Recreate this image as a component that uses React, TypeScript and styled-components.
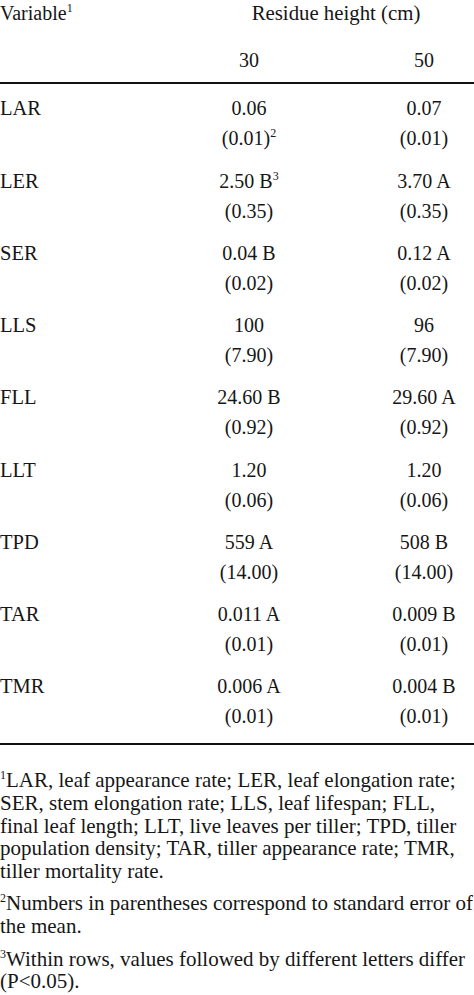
import React from "react";
import styled, { createGlobalStyle } from "styled-components";

const GlobalStyle = createGlobalStyle`
  html, body {
    margin: 0;
    padding: 0;
    background: #ffffff;
  }
  body {
    font-family: "Liberation Serif", "Times New Roman", serif;
    color: #161616;
  }
`;

const Page = styled.div`
  width: 474px;
  overflow: hidden;
`;

const Grid = styled.div`
  display: grid;
  grid-template-columns: 124px 250px 100px;
  font-size: 20px;
`;

const HeadGrid = styled(Grid)`
  line-height: 26px;
  padding-bottom: 9px;
`;

const HeadCell = styled.div<{ $span?: boolean }>`
  grid-column: ${(p) => (p.$span ? "2 / 4" : "auto")};
  padding-left: ${(p) => (p.$span ? "74px" : "0")};
  text-align: ${(p) => (p.$span ? "center" : "left")};
  font-size: ${(p) => (p.$span ? "20.8px" : "20px")};
  white-space: nowrap;
`;

const NumHead = styled.div<{ $top?: number }>`
  text-align: center;
  margin-top: ${(p) => p.$top ?? 0}px;
`;

const Rule = styled.div<{ $weight: number }>`
  height: ${(p) => p.$weight}px;
  background: #111111;
`;

const Body = styled.div`
  padding: 3.5px 0 5.5px;
`;

const Row = styled(Grid)`
  line-height: 30px;
  padding: 6px 0 6.25px;
`;

const Label = styled.div`
  font-size: 20.5px;
`;

const Cell = styled.div`
  display: flex;
  flex-direction: column;
  align-items: center;
  white-space: nowrap;
`;

const Sup = styled.sup`
  font-size: 12px;
  line-height: 0;
  vertical-align: 8px;
`;

const Notes = styled.div`
  padding-top: 24px;
  font-size: 21px;
  line-height: 22.8px;
  display: flex;
  flex-direction: column;
  gap: 9.5px;
`;

const Note = styled.p`
  margin: 0;
  white-space: nowrap;
`;

const NoteLine = styled.span`
  display: block;
`;

const NoteSup = styled.sup`
  font-size: 12px;
  line-height: 0;
  vertical-align: 8px;
`;

type Value = { text: string; sup?: string };
type RowData = { label: string; a: Value; aSe: Value; b: Value; bSe: Value };

const rows: RowData[] = [
  { label: "LAR", a: { text: "0.06" }, aSe: { text: "(0.01)", sup: "2" }, b: { text: "0.07" }, bSe: { text: "(0.01)" } },
  { label: "LER", a: { text: "2.50 B", sup: "3" }, aSe: { text: "(0.35)" }, b: { text: "3.70 A" }, bSe: { text: "(0.35)" } },
  { label: "SER", a: { text: "0.04 B" }, aSe: { text: "(0.02)" }, b: { text: "0.12 A" }, bSe: { text: "(0.02)" } },
  { label: "LLS", a: { text: "100" }, aSe: { text: "(7.90)" }, b: { text: "96" }, bSe: { text: "(7.90)" } },
  { label: "FLL", a: { text: "24.60 B" }, aSe: { text: "(0.92)" }, b: { text: "29.60 A" }, bSe: { text: "(0.92)" } },
  { label: "LLT", a: { text: "1.20" }, aSe: { text: "(0.06)" }, b: { text: "1.20" }, bSe: { text: "(0.06)" } },
  { label: "TPD", a: { text: "559 A" }, aSe: { text: "(14.00)" }, b: { text: "508 B" }, bSe: { text: "(14.00)" } },
  { label: "TAR", a: { text: "0.011 A" }, aSe: { text: "(0.01)" }, b: { text: "0.009 B" }, bSe: { text: "(0.01)" } },
  { label: "TMR", a: { text: "0.006 A" }, aSe: { text: "(0.01)" }, b: { text: "0.004 B" }, bSe: { text: "(0.01)" } },
];

const notes: { mark: string; lines: string[] }[] = [
  {
    mark: "1",
    lines: [
      "LAR, leaf appearance rate; LER, leaf elongation rate;",
      "SER, stem elongation rate; LLS, leaf lifespan; FLL,",
      "final leaf length; LLT, live leaves per tiller; TPD, tiller",
      "population density; TAR, tiller appearance rate; TMR,",
      "tiller mortality rate.",
    ],
  },
  {
    mark: "2",
    lines: ["Numbers in parentheses correspond to standard error of", "the mean."],
  },
  {
    mark: "3",
    lines: ["Within rows, values followed by different letters differ", "(P<0.05)."],
  },
];

function Val({ v }: { v: Value }) {
  return (
    <span>
      {v.text}
      {v.sup && <Sup>{v.sup}</Sup>}
    </span>
  );
}

export default function App() {
  return (
    <Page>
      <GlobalStyle />
      <HeadGrid>
        <HeadCell>
          Variable<Sup>1</Sup>
        </HeadCell>
        <HeadCell $span>Residue height (cm)</HeadCell>
        <div />
        <NumHead $top={21.25}>30</NumHead>
        <NumHead $top={21.25}>50</NumHead>
      </HeadGrid>
      <Rule $weight={1.5} />
      <Body>
        {rows.map((r) => (
          <Row key={r.label}>
            <Label>{r.label}</Label>
            <Cell>
              <Val v={r.a} />
              <Val v={r.aSe} />
            </Cell>
            <Cell>
              <Val v={r.b} />
              <Val v={r.bSe} />
            </Cell>
          </Row>
        ))}
      </Body>
      <Rule $weight={2} />
      <Notes>
        {notes.map((n) => (
          <Note key={n.mark}>
            {n.lines.map((line, i) => (
              <NoteLine key={i}>
                {i === 0 && <NoteSup>{n.mark}</NoteSup>}
                {line}
              </NoteLine>
            ))}
          </Note>
        ))}
      </Notes>
    </Page>
  );
}
